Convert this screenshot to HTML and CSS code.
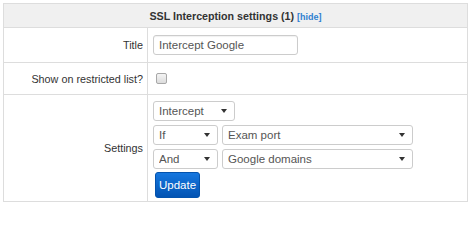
FILE: index.html
```html
<!DOCTYPE html>
<html>
<head>
<meta charset="utf-8">
<link rel="stylesheet" href="styles.css">
</head>
<body>
<table class="settings">
  <colgroup><col class="col-label"><col class="col-field"></colgroup>
  <thead>
    <tr><th class="head" colspan="2">SSL Interception settings (1) <a class="hide" href="#">[hide]</a></th></tr>
  </thead>
  <tbody>
    <tr class="row-title">
      <td class="label">Title</td>
      <td class="field"><input class="text" type="text" value="Intercept Google"></td>
    </tr>
    <tr class="row-check">
      <td class="label">Show on restricted list?</td>
      <td class="field"><input class="check" type="checkbox"></td>
    </tr>
    <tr class="row-settings">
      <td class="label">Settings</td>
      <td class="field">
        <div class="stack">
          <div class="line"><span class="sel w-action"><select><option>Intercept</option></select></span></div>
          <div class="line">
            <span class="sel w-op"><select><option>If</option></select></span>
            <span class="sel w-cond"><select><option>Exam port</option></select></span>
          </div>
          <div class="line">
            <span class="sel w-op"><select><option>And</option></select></span>
            <span class="sel w-cond"><select><option>Google domains</option></select></span>
          </div>
          <div class="line"><button class="update" type="button">Update</button></div>
        </div>
      </td>
    </tr>
  </tbody>
</table>
</body>
</html>
```

FILE: styles.css
```css
html, body { background: #fff; }
body {
  margin: 3px;
  font-family: "Liberation Sans", Arial, sans-serif;
  color: #333;
}
.settings {
  width: 465px;
  border-collapse: collapse;
  border: 1px solid #dddddd;
  table-layout: fixed;
}
.col-label { width: 144px; }
.head {
  background: #f0f0f0;
  height: 23px;
  padding: 0;
  font-size: 10.7px;
  font-weight: bold;
  text-align: center;
  vertical-align: middle;
  border: 1px solid #dddddd;
  color: #333;
}
.hide {
  color: #2f7fd0;
  font-size: 9px;
  text-decoration: none;
}
.settings td {
  border: 1px solid #dddddd;
  vertical-align: middle;
}
.label {
  text-align: right;
  font-size: 10.8px;
  padding: 0 4px 0 5px;
  color: #333;
}
.field { padding: 0 5px; }
.row-title .field { padding-top: 7px; padding-bottom: 7px; }
.row-check .field { padding-top: 10px; padding-bottom: 10px; }
.row-settings .field { padding-top: 6px; padding-bottom: 3px; }

.text {
  display: block;
  box-sizing: border-box;
  width: 145px;
  height: 20px;
  margin: 0;
  padding: 0 5px;
  border: 1px solid #cccccc;
  border-radius: 3px;
  font-family: "Liberation Sans", Arial, sans-serif;
  font-size: 11.5px;
  color: #555;
  box-shadow: inset 0 1px 1px rgba(0,0,0,0.06);
}
.check {
  appearance: none;
  -webkit-appearance: none;
  display: block;
  width: 11px;
  height: 11px;
  margin: 0 0 0 3px;
  border: 1px solid #a8a8a8;
  border-radius: 2px;
  background: linear-gradient(#f4f4f4, #dcdcdc);
}
.stack {
  display: flex;
  flex-direction: column;
  gap: 4px;
}
.line {
  display: flex;
  gap: 4px;
}
.sel {
  position: relative;
  display: block;
  height: 20px;
}
.sel select {
  appearance: none;
  -webkit-appearance: none;
  box-sizing: border-box;
  width: 100%;
  height: 20px;
  margin: 0;
  padding: 0 5px;
  border: 1px solid #cccccc;
  border-radius: 3px;
  background: #fff;
  font-family: "Liberation Sans", Arial, sans-serif;
  font-size: 11.5px;
  color: #555;
}
.sel::after {
  content: "";
  position: absolute;
  right: 8px;
  top: 8px;
  border-left: 3px solid transparent;
  border-right: 3px solid transparent;
  border-top: 4px solid #333;
  pointer-events: none;
}
.w-action { width: 82px; }
.w-op { width: 65px; }
.w-cond { width: 191px; }
.update {
  margin: -1px 0 0 2px;
  box-sizing: border-box;
  width: 45px;
  height: 26px;
  padding: 0;
  border: 1px solid #0453ad;
  border-radius: 3px;
  background: linear-gradient(#1677df, #0253b3);
  color: #fff;
  font-family: "Liberation Sans", Arial, sans-serif;
  font-size: 11.5px;
}
```
